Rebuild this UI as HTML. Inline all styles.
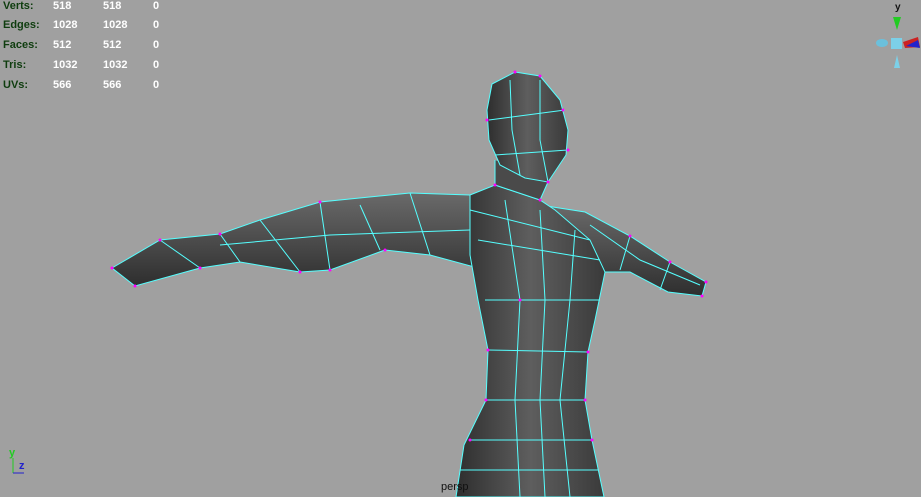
<!DOCTYPE html>
<html><head><meta charset="utf-8"><style>
html,body{margin:0;padding:0;}
body{width:921px;height:497px;background:#a0a0a0;position:relative;overflow:hidden;font-family:"Liberation Sans",Arial,sans-serif;}
.st{position:absolute;left:3px;font-size:11px;font-weight:bold;}
.st span{position:absolute;top:0;white-space:nowrap;}
.l{color:#0f3d0f;left:0}
.v{color:#fff;}
</style></head><body>
<div class="st" style="top:0px"><span class="l">Verts:</span><span class="v" style="left:50px">518</span><span class="v" style="left:100px">518</span><span class="v" style="left:150px">0</span></div>
<div class="st" style="top:19px"><span class="l">Edges:</span><span class="v" style="left:50px">1028</span><span class="v" style="left:100px">1028</span><span class="v" style="left:150px">0</span></div>
<div class="st" style="top:39px"><span class="l">Faces:</span><span class="v" style="left:50px">512</span><span class="v" style="left:100px">512</span><span class="v" style="left:150px">0</span></div>
<div class="st" style="top:59px"><span class="l">Tris:</span><span class="v" style="left:50px">1032</span><span class="v" style="left:100px">1032</span><span class="v" style="left:150px">0</span></div>
<div class="st" style="top:79px"><span class="l">UVs:</span><span class="v" style="left:50px">566</span><span class="v" style="left:100px">566</span><span class="v" style="left:150px">0</span></div>

<svg width="921" height="497" style="position:absolute;left:0;top:0">
<defs>
<linearGradient id="g" x1="0" y1="0" x2="1" y2="0">
<stop offset="0" stop-color="#2e2e2e"/><stop offset="0.5" stop-color="#5e5e5e"/><stop offset="1" stop-color="#3a3a3a"/>
</linearGradient>
<linearGradient id="a" x1="0" y1="0" x2="0" y2="1">
<stop offset="0" stop-color="#6a6a6a"/><stop offset="1" stop-color="#2e2e2e"/>
</linearGradient>
</defs>
<path d="M470,195 L410,193 L320,202 L260,220 L220,234 L160,240 L112,268 L135,286 L200,268 L240,262 L300,272 L330,270 L385,250 L430,255 L478,268 Z" fill="url(#a)" stroke="#5ff" stroke-width="1"/>
<path d="M540,205 L585,212 L630,236 L670,262 L706,282 L702,296 L668,292 L630,272 L600,272 Z" fill="url(#a)" stroke="#5ff" stroke-width="1"/>
<path d="M470,195 L495,185 L540,200 L555,210 L590,240 L605,272 L595,320 L588,352 L585,400 L592,440 L604,497 L456,497 L464,445 L486,400 L488,350 L478,300 L470,255 Z" fill="url(#g)" stroke="#5ff" stroke-width="1"/>
<path d="M495,160 L495,185 L540,200 L548,182" fill="#4a4a4a" stroke="#5ff"/>
<path d="M515,72 L540,76 L560,100 L568,130 L566,155 L548,182 L525,178 L500,165 L489,140 L487,110 L492,84 Z" fill="url(#g)" stroke="#5ff" stroke-width="1"/>
<g stroke="#5ff" stroke-width="1" fill="none">
<path d="M510,80 L512,130 L520,175 M540,80 L540,140 L548,182 M489,120 L565,110 M495,155 L568,150"/>
<path d="M470,210 L590,240 M478,240 L600,260 M485,300 L600,300 M488,350 L588,352 M486,400 L585,400 M470,440 L592,440 M460,470 L598,470"/>
<path d="M505,200 L520,300 L515,400 L520,497 M540,210 L545,300 L540,400 L545,497 M575,230 L570,300 L560,400 L570,497"/>
<path d="M320,202 L330,270 M360,205 L380,250 M410,193 L430,255 M260,220 L300,272 M220,234 L240,262 M160,240 L200,268"/>
<path d="M220,245 L330,235 L470,230 M630,236 L620,270 M670,262 L660,290 M590,225 L640,260 L700,285"/>
</g>
<g fill="#f0f">
<circle cx="515" cy="72" r="1.5"/><circle cx="540" cy="76" r="1.5"/><circle cx="563" cy="110" r="1.5"/><circle cx="568" cy="150" r="1.5"/><circle cx="548" cy="182" r="1.5"/><circle cx="487" cy="120" r="1.5"/><circle cx="495" cy="185" r="1.5"/><circle cx="540" cy="200" r="1.5"/>
<circle cx="320" cy="202" r="1.5"/><circle cx="220" cy="234" r="1.5"/><circle cx="160" cy="240" r="1.5"/><circle cx="112" cy="268" r="1.5"/><circle cx="135" cy="286" r="1.5"/><circle cx="200" cy="268" r="1.5"/><circle cx="300" cy="272" r="1.5"/><circle cx="330" cy="270" r="1.5"/><circle cx="385" cy="250" r="1.5"/>
<circle cx="630" cy="236" r="1.5"/><circle cx="670" cy="262" r="1.5"/><circle cx="706" cy="282" r="1.5"/><circle cx="702" cy="296" r="1.5"/>
<circle cx="520" cy="300" r="1.5"/><circle cx="488" cy="350" r="1.5"/><circle cx="588" cy="352" r="1.5"/><circle cx="486" cy="400" r="1.5"/><circle cx="585" cy="400" r="1.5"/><circle cx="592" cy="440" r="1.5"/><circle cx="470" cy="440" r="1.5"/>
</g>
<text x="895" y="10" font-size="10" font-weight="bold" fill="#111" font-family="Liberation Sans">y</text>
<polygon points="893,17 901,17 897,30" fill="#2c2"/>
<rect x="891" y="38" width="11" height="11" fill="#7cd0e8"/>
<ellipse cx="882" cy="43" rx="6" ry="4" fill="#6bc0dc"/>
<polygon points="903,42 918,37 920,47 905,48" fill="#c22"/>
<polygon points="906,46 918,40 920,48" fill="#22c"/>
<polygon points="897,55 894,68 900,68" fill="#7cd0e8"/>
<text x="9" y="456" font-size="11" font-weight="bold" fill="#2c2" font-family="Liberation Sans">y</text>
<line x1="13" y1="458" x2="13" y2="473" stroke="#2c2"/>
<line x1="13" y1="473" x2="24" y2="473" stroke="#22c"/>
<text x="19" y="469" font-size="11" font-weight="bold" fill="#22c" font-family="Liberation Sans">z</text>
<text x="441" y="490" font-size="11" fill="#111" font-family="Liberation Sans">persp</text>
</svg>
</body></html>
